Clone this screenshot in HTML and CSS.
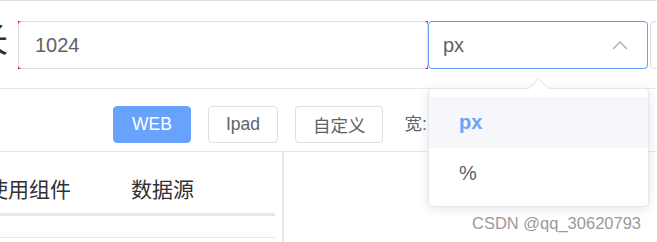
FILE: index.html
```html
<!DOCTYPE html>
<html>
<head>
    <title>Canvas settings</title>
    <link rel="stylesheet" href="styles.css">
</head>
<body>
    <div class="size-row">
        <span class="size-label">长</span>
        <div class="input-wrap">
            <input class="size-input" value="1024">
        </div>
        <div class="unit-select">
            <span class="unit-value">px</span>
            <svg class="unit-arrow" width="16" height="10" viewBox="0 0 16 10">
                <path d="M1 9 L8 2 L15 9" fill="none" stroke="#a8abb2" stroke-width="1.3"/>
            </svg>
        </div>
        <div class="next-input"></div>
    </div>

    <div class="toolbar">
        <button class="tool-btn active">WEB</button>
        <button class="tool-btn">Ipad</button>
        <button class="tool-btn">自定义</button>
        <span class="size-text">宽: 1024 px</span>
    </div>

    <div class="main">
        <div class="side">
            <div class="tabs">
                <span class="tab">使用组件</span>
                <span class="tab">数据源</span>
            </div>
            <div class="tab-body"></div>
        </div>
        <div class="stage"></div>
    </div>

    <div class="dropdown">
        <div class="drop-item selected">px</div>
        <div class="drop-item">%</div>
    </div>

    <div class="watermark">CSDN @qq_30620793</div>
</body>
</html>
```

FILE: styles.css
```css
body {
    margin: 0;
    width: 657px;
    height: 242px;
    overflow: hidden;
    position: relative;
    background: #fff;
    font-family: "Liberation Sans", "Noto Sans CJK SC", sans-serif;
    color: #606266;
}
.size-row {
    display: flex;
    align-items: flex-start;
    border-top: 1px solid #dcdfe6;
    border-bottom: 1px solid #e4e7ed;
    padding-top: 20px;
    box-sizing: border-box;
    height: 89px;
}
.size-row > * {
    flex-shrink: 0;
}
.size-label {
    font-size: 34px;
    line-height: 40px;
    color: #303133;
    margin-left: -26px;
    width: 34px;
    margin-right: 10px;
}
.input-wrap {
    width: 410px;
    height: 48px;
    box-sizing: border-box;
    border: 1px solid #e02020;
}
.size-input {
    display: block;
    width: 410px;
    height: 48px;
    margin: -1px;
    box-sizing: border-box;
    border: 1px solid #dcdfe6;
    border-radius: 4px;
    padding: 0 16px;
    font-family: "Liberation Sans", sans-serif;
    font-size: 20px;
    color: #606266;
    outline: none;
    background: #fff;
}
.unit-select {
    width: 220px;
    height: 48px;
    box-sizing: border-box;
    border: 1px solid #5f9ff7;
    border-radius: 4px;
    display: flex;
    align-items: center;
    justify-content: space-between;
    padding: 0 19px 0 14px;
    font-size: 20px;
}
.unit-arrow {
    display: block;
}
.next-input {
    margin-left: 2px;
    width: 40px;
    height: 48px;
    box-sizing: border-box;
    border: 1px solid #dcdfe6;
    border-radius: 4px;
}
.toolbar {
    display: flex;
    align-items: flex-start;
    gap: 17px;
    height: 63px;
    box-sizing: border-box;
    padding: 17px 0 8px 113px;
    border-bottom: 1px solid #e4e7ed;
}
.tool-btn {
    height: 37px;
    padding: 0 17px;
    font-family: "Liberation Sans", "Noto Sans CJK SC", sans-serif;
    font-size: 17.5px;
    color: #606266;
    background: #fff;
    border: 1px solid #dcdfe6;
    border-radius: 4px;
}
.tool-btn.active {
    background: #67a2fd;
    border-color: #67a2fd;
    color: #fff;
    padding: 0 18px;
}
.size-text {
    margin-left: 4px;
    font-size: 17.5px;
    line-height: 37px;
    white-space: nowrap;
}
.main {
    display: flex;
    height: 100px;
}
.side {
    width: 284px;
    border-right: 2px solid #e9e9eb;
    box-sizing: border-box;
    padding-right: 7px;
}
.tabs {
    display: flex;
    gap: 60px;
    margin-left: -13px;
    padding-top: 23px;
    height: 64px;
    box-sizing: border-box;
    border-bottom: 3px solid #e4e7ed;
}
.tab {
    font-size: 21px;
    line-height: 30px;
    color: #303133;
}
.tab-body {
    height: 21px;
    border-bottom: 1px solid #e9e9eb;
}
.stage {
    flex: 1;
}
.dropdown {
    position: absolute;
    left: 428px;
    top: 88px;
    width: 221px;
    height: 119px;
    box-sizing: border-box;
    background: #fff;
    border: 1px solid #e4e7ed;
    border-radius: 4px;
    box-shadow: 0 2px 12px rgba(0, 0, 0, 0.1);
    padding: 8px 0;
}
.dropdown::before {
    content: "";
    position: absolute;
    left: 102px;
    top: -8px;
    width: 14px;
    height: 14px;
    background: #fff;
    border-left: 1px solid #e4e7ed;
    border-top: 1px solid #e4e7ed;
    transform: rotate(45deg);
}
.drop-item {
    position: relative;
    height: 51px;
    line-height: 51px;
    padding-left: 30px;
    font-size: 20px;
    color: #606266;
}
.drop-item.selected {
    background: #f5f7fa;
    color: #6aa4f8;
    font-weight: bold;
}
.watermark {
    position: absolute;
    left: 472px;
    top: 214px;
    font-size: 16.5px;
    color: #9a9a9a;
    text-shadow: 0 0 2px #fff;
}
```
